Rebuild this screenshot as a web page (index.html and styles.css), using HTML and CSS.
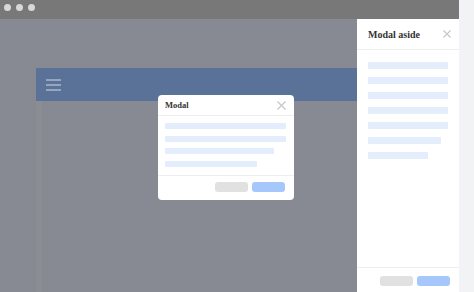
FILE: index.html
```html
<!DOCTYPE html>
<html lang="en">
  <head>
    <meta charset="UTF-8" />
    <title>Modal preview</title>
    <link rel="stylesheet" href="styles.css">
  </head>
  <body>
    <div class="shell">
      <div class="window">
        <!-- 브라우저 상단 바 -->
        <div class="titlebar">
          <span class="dot"></span>
          <span class="dot"></span>
          <span class="dot"></span>
        </div>

        <div class="viewport">
          <div class="app">
            <div class="appbar">
              <span class="burger"><i></i><i></i><i></i></span>
            </div>
            <div class="app-body"></div>
          </div>

          <!-- 가운데 모달 -->
          <div class="modal">
            <div class="modal-head">
              <span class="modal-title">Modal</span>
              <svg class="close" width="9" height="9" viewBox="0 0 9 9">
                <path d="M0.5 0.5 L8.5 8.5 M8.5 0.5 L0.5 8.5" />
              </svg>
            </div>
            <div class="modal-body">
              <span class="line"></span>
              <span class="line"></span>
              <span class="line w-90"></span>
              <span class="line w-75"></span>
            </div>
            <div class="modal-foot">
              <span class="btn btn-grey"></span>
              <span class="btn btn-blue"></span>
            </div>
          </div>

          <!-- 오른쪽 사이드 모달 -->
          <div class="aside">
            <div class="aside-head">
              <span class="aside-title">Modal aside</span>
              <svg class="close" width="8" height="8" viewBox="0 0 8 8">
                <path d="M0.5 0.5 L7.5 7.5 M7.5 0.5 L0.5 7.5" />
              </svg>
            </div>
            <div class="aside-body">
              <span class="line tall"></span>
              <span class="line tall"></span>
              <span class="line tall"></span>
              <span class="line tall"></span>
              <span class="line tall"></span>
              <span class="line tall a-91"></span>
              <span class="line tall a-75"></span>
            </div>
            <div class="aside-foot">
              <span class="btn btn-grey"></span>
              <span class="btn btn-blue"></span>
            </div>
          </div>
        </div>
      </div>
      <div class="gutter"></div>
    </div>
  </body>
</html>
```

FILE: styles.css
```css
body {
  margin: 0;
  font-family: "Liberation Serif", serif;
  background: #f2f3f5;
}

.shell {
  display: flex;
  width: 474px;
  height: 292px;
  overflow: hidden;
}

.window {
  width: 459px;
  display: flex;
  flex-direction: column;
}

.gutter {
  flex: 1;
  background: #f2f3f5;
}

.titlebar {
  height: 19px;
  background: #787878;
  display: flex;
  align-items: flex-start;
  gap: 5px;
  padding: 4px 0 0 4px;
  box-sizing: border-box;
}

.dot {
  width: 7px;
  height: 7px;
  border-radius: 50%;
  background: #d8d8d8;
}

.viewport {
  flex: 1;
  position: relative;
  background: #878a93;
}

.app {
  padding: 49px 0 0 36px;
  display: flex;
  flex-direction: column;
  height: 100%;
  box-sizing: border-box;
}

.appbar {
  height: 33px;
  background: #5b7298;
  display: flex;
  align-items: center;
  padding-left: 10px;
}

.burger {
  display: flex;
  flex-direction: column;
  gap: 3px;
}

.burger i {
  display: block;
  width: 15px;
  height: 2px;
  background: #97a6bf;
}

.app-body {
  flex: 1;
  border-left: 6px solid #8a8d94;
}

/* 모달 공통 */
.modal {
  position: absolute;
  left: 158px;
  top: 76px;
  width: 136px;
  height: 105px;
  background: #fff;
  border-radius: 4px;
  display: flex;
  flex-direction: column;
}

.modal-head {
  height: 20px;
  display: flex;
  align-items: center;
  justify-content: space-between;
  padding: 0 8px 0 7px;
  border-bottom: 1px solid #eeeeee;
}

.modal-title {
  font-size: 8.5px;
  font-weight: 700;
  color: #333;
}

.close {
  display: block;
  stroke: #c8c8c8;
  stroke-width: 1.3;
  fill: none;
}

.modal-body {
  flex: 1;
  display: flex;
  flex-direction: column;
  gap: 6.5px;
  padding: 7px 8px 0 7px;
  border-bottom: 1px solid #eeeeee;
}

.line {
  display: block;
  height: 6px;
  border-radius: 1px;
  background: #e4edfb;
}

.w-90 {
  width: 90%;
}

.w-75 {
  width: 76%;
}

.modal-foot {
  height: 24px;
  display: flex;
  justify-content: flex-end;
  gap: 4px;
  padding: 6px 9px 0 0;
  box-sizing: border-box;
}

.btn {
  width: 33px;
  height: 10px;
  border-radius: 3px;
}

.btn-grey {
  background: #e1e1e1;
}

.btn-blue {
  background: #a6c7fb;
}

/* 사이드 모달 */
.aside {
  position: absolute;
  top: 0;
  right: 0;
  bottom: 0;
  width: 102px;
  background: #fff;
  display: flex;
  flex-direction: column;
}

.aside-head {
  height: 30px;
  display: flex;
  align-items: center;
  justify-content: space-between;
  padding: 0 8px 0 11px;
  border-bottom: 1px solid #eeeeee;
}

.aside-title {
  font-size: 10px;
  font-weight: 700;
  color: #333;
}

.aside-body {
  flex: 1;
  display: flex;
  flex-direction: column;
  gap: 8px;
  padding: 12px 11px 0 11px;
  border-bottom: 1px solid #eeeeee;
}

.tall {
  height: 7px;
}

.a-91 {
  width: 91%;
}

.a-75 {
  width: 75%;
}

.aside-foot {
  height: 24px;
  display: flex;
  justify-content: flex-end;
  gap: 4px;
  padding: 8px 9px 0 0;
  box-sizing: border-box;
}
```
